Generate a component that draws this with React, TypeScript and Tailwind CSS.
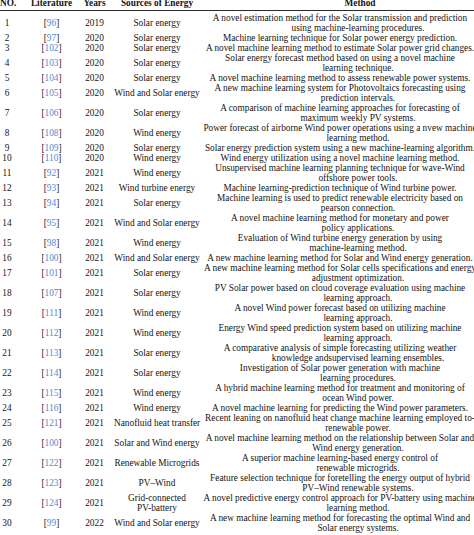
import React from "react";

interface Study {
  no: number;
  ref: number;
  year: number;
  source: string[];
  method: string[];
}

const studies: Study[] = [
  { no: 1, ref: 96, year: 2019, source: ["Solar energy"], method: ["A novel estimation method for the Solar transmission and prediction", "using machine-learning procedures."] },
  { no: 2, ref: 97, year: 2020, source: ["Solar energy"], method: ["Machine learning technique for Solar power energy prediction."] },
  { no: 3, ref: 102, year: 2020, source: ["Solar energy"], method: ["A novel machine learning method to estimate Solar power grid changes."] },
  { no: 4, ref: 103, year: 2020, source: ["Solar energy"], method: ["Solar energy forecast method based on using a novel machine", "learning technique."] },
  { no: 5, ref: 104, year: 2020, source: ["Solar energy"], method: ["A novel machine learning method to assess renewable power systems."] },
  { no: 6, ref: 105, year: 2020, source: ["Wind and Solar energy"], method: ["A new machine learning system for Photovoltaics forecasting using", "prediction intervals."] },
  { no: 7, ref: 106, year: 2020, source: ["Solar energy"], method: ["A comparison of machine learning approaches for forecasting of", "maximum weekly PV systems."] },
  { no: 8, ref: 108, year: 2020, source: ["Wind energy"], method: ["Power forecast of airborne Wind power operations using a nvew machine", "learning method."] },
  { no: 9, ref: 109, year: 2020, source: ["Solar energy"], method: ["Solar energy prediction system using a new machine-learning algorithm."] },
  { no: 10, ref: 110, year: 2020, source: ["Wind energy"], method: ["Wind energy utilization using a novel machine learning method."] },
  { no: 11, ref: 92, year: 2021, source: ["Wind energy"], method: ["Unsupervised machine learning planning technique for wave-Wind", "offshore power tools."] },
  { no: 12, ref: 93, year: 2021, source: ["Wind turbine energy"], method: ["Machine learning-prediction technique of Wind turbine power."] },
  { no: 13, ref: 94, year: 2021, source: ["Solar energy"], method: ["Machine learning is used to predict renewable electricity based on", "pearson connection."] },
  { no: 14, ref: 95, year: 2021, source: ["Wind and Solar energy"], method: ["A novel machine learning method for monetary and power", "policy applications."] },
  { no: 15, ref: 98, year: 2021, source: ["Wind energy"], method: ["Evaluation of Wind turbine energy generation by using", "machine-learning method."] },
  { no: 16, ref: 100, year: 2021, source: ["Wind and Solar energy"], method: ["A new machine learning method for Solar and Wind energy generation."] },
  { no: 17, ref: 101, year: 2021, source: ["Solar energy"], method: ["A new machine learning method for Solar cells specifications and energy", "adjustment optimization."] },
  { no: 18, ref: 107, year: 2021, source: ["Solar energy"], method: ["PV Solar power based on cloud coverage evaluation using machine", "learning approach."] },
  { no: 19, ref: 111, year: 2021, source: ["Wind energy"], method: ["A novel Wind power forecast based on utilizing machine", "learning approach."] },
  { no: 20, ref: 112, year: 2021, source: ["Wind energy"], method: ["Energy Wind speed prediction system based on utilizing machine", "learning approach."] },
  { no: 21, ref: 113, year: 2021, source: ["Solar energy"], method: ["A comparative analysis of simple forecasting utilizing weather", "knowledge andsupervised learning ensembles."] },
  { no: 22, ref: 114, year: 2021, source: ["Solar energy"], method: ["Investigation of Solar power generation with machine", "learning procedures."] },
  { no: 23, ref: 115, year: 2021, source: ["Wind energy"], method: ["A hybrid machine learning method for treatment and monitoring of", "ocean Wind power."] },
  { no: 24, ref: 116, year: 2021, source: ["Wind energy"], method: ["A novel machine learning for predicting the Wind power parameters."] },
  { no: 25, ref: 121, year: 2021, source: ["Nanofluid heat transfer"], method: ["Recent leaning on nanofluid heat change machine learning employed to-", "renewable power."] },
  { no: 26, ref: 100, year: 2021, source: ["Solar and Wind energy"], method: ["A novel machine learning method on the relationship between Solar and", "Wind energy generation."] },
  { no: 27, ref: 122, year: 2021, source: ["Renewable Microgrids"], method: ["A superior machine learning-based energy control of", "renewable microgrids."] },
  { no: 28, ref: 123, year: 2021, source: ["PV–Wind"], method: ["Feature selection technique for foretelling the energy output of hybrid", "PV–Wind renewable systems."] },
  { no: 29, ref: 124, year: 2021, source: ["Grid-connected", "PV-battery"], method: ["A novel predictive energy control approach for PV-battery using machine", "learning method."] },
  { no: 30, ref: 99, year: 2022, source: ["Wind and Solar energy"], method: ["A new machine learning method for forecasting the optimal Wind and", "Solar energy systems."] },
];

// fixed column widths, tuned so the centres line up with the scan
const col = {
  no: "w-[14px] shrink-0 text-center",
  lit: "w-[47px] ml-[14px] shrink-0 text-center",
  year: "w-[39px] shrink-0 text-center",
  source: "w-[86px] shrink-0 text-center",
  method: "w-[280px] shrink-0 text-center",
};

const StudyRow = ({ study }: { study: Study }) => (
  <div className="flex items-center">
    <div className={col.no}>{study.no}</div>
    <div className={col.lit}>
      [<span className="text-[#4d8ad6]">{study.ref}</span>]
    </div>
    <div className={col.year}>{study.year}</div>
    <div className={col.source}>
      {study.source.map((line) => (
        <div key={line} className="whitespace-nowrap">{line}</div>
      ))}
    </div>
    <div className={col.method}>
      {study.method.map((line, i) => (
        <div key={i} className={`whitespace-nowrap ${i > 0 ? "pl-[36px]" : ""}`}>
          {line}
        </div>
      ))}
    </div>
  </div>
);

export default function App() {
  return (
    <div
      className="w-[474px] h-[535px] overflow-hidden bg-white text-[#141414] text-[9.3px] leading-[10px]"
      style={{ fontFamily: '"Liberation Serif", "Times New Roman", serif' }}
    >
      {/* header, top of it is cut off in the scan */}
      <div className="flex h-[11px] border-b border-[#2a2a2a] font-bold leading-[7px]">
        <div className={col.no}>NO.</div>
        <div className={col.lit}>Literature</div>
        <div className={col.year}>Years</div>
        <div className={col.source + " whitespace-nowrap"}>Sources of Energy</div>
        <div className={col.method + " pl-[40px]"}>Method</div>
      </div>

      <div className="pt-[2px]">
        {studies.map((s) => (
          <StudyRow key={s.no} study={s} />
        ))}
      </div>
    </div>
  );
}
